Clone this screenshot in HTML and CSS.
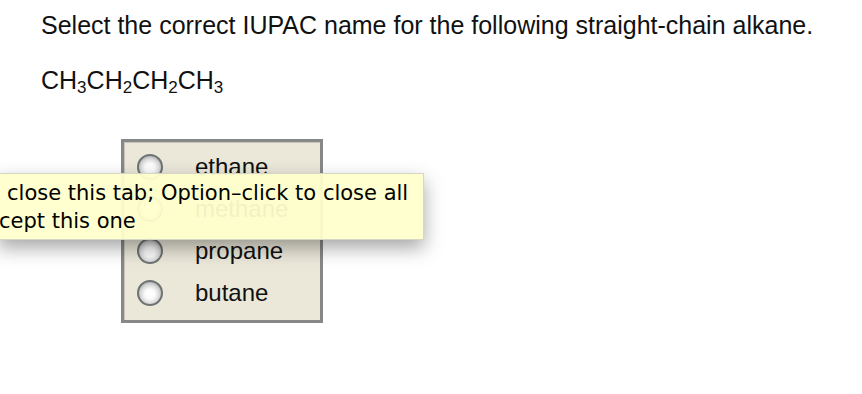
FILE: index.html
```html
<!DOCTYPE html>
<html>
<head>
<meta charset="utf-8">
<link rel="stylesheet" href="styles.css">
</head>
<body>
<div class="page">
  <p class="question">Select the correct IUPAC name for the following straight-chain alkane.</p>
  <p class="formula">CH<sub>3</sub>CH<sub>2</sub>CH<sub>2</sub>CH<sub>3</sub></p>
  <div class="choices">
    <label class="choice"><span class="radio"></span><span class="label">ethane</span></label>
    <label class="choice"><span class="radio"></span><span class="label">methane</span></label>
    <label class="choice"><span class="radio"></span><span class="label">propane</span></label>
    <label class="choice"><span class="radio"></span><span class="label">butane</span></label>
  </div>
</div>
<div class="tooltip">
  <div class="tip-line first">close this tab; Option–click to close all</div>
  <div class="tip-line">cept this one</div>
</div>
</body>
</html>
```
FILE: styles.css
```css
html, body {
  margin: 0;
  padding: 0;
  background: #ffffff;
}
body {
  width: 862px;
  height: 394px;
  overflow: hidden;
  position: relative;
  font-family: "Liberation Sans", Arial, sans-serif;
  color: #111;
}
.page {
  padding: 10px 0 0 41px;
}
.question {
  margin: 0;
  font-size: 25px;
  line-height: 30px;
}
.formula {
  margin: 25px 0 0 0;
  font-size: 25px;
  line-height: 30px;
}
.formula sub {
  font-size: 17px;
  vertical-align: -4px;
  line-height: 0;
}
.choices {
  margin: 44px 0 0 80px;
  width: 202px;
  height: 184px;
  box-sizing: border-box;
  background: #ebe8da;
  border: 3px solid #878988;
  box-shadow: inset 1px 1px 0 #c8c6bc;
  padding: 4px 0 0 13px;
  display: flex;
  flex-direction: column;
}
.choice {
  display: flex;
  align-items: center;
  height: 42px;
}
.radio {
  width: 26px;
  height: 26px;
  border-radius: 50%;
  box-sizing: border-box;
  border: 2px solid #6e7472;
  background: radial-gradient(circle at 50% 55%, #ffffff 0, #fbfbfb 30%, #dcdcdc 55%, #a9abaa 80%, #8a8e8c 100%);
  flex: none;
}
.label {
  margin-left: 32px;
  font-size: 24px;
  color: #111;
}
.tooltip {
  position: absolute;
  left: -2px;
  top: 173px;
  width: 426px;
  height: 67px;
  box-sizing: border-box;
  background: rgba(255, 255, 204, 0.94);
  border: 1px solid #d6d6c4;
  box-shadow: 0 8px 18px rgba(0, 0, 0, 0.35);
  font-family: "DejaVu Sans", "Lucida Grande", sans-serif;
  font-size: 21px;
  color: #000;
  padding: 5px 0 0 0;
  line-height: 28px;
}
.tip-line.first {
  padding-left: 8px;
}
```
